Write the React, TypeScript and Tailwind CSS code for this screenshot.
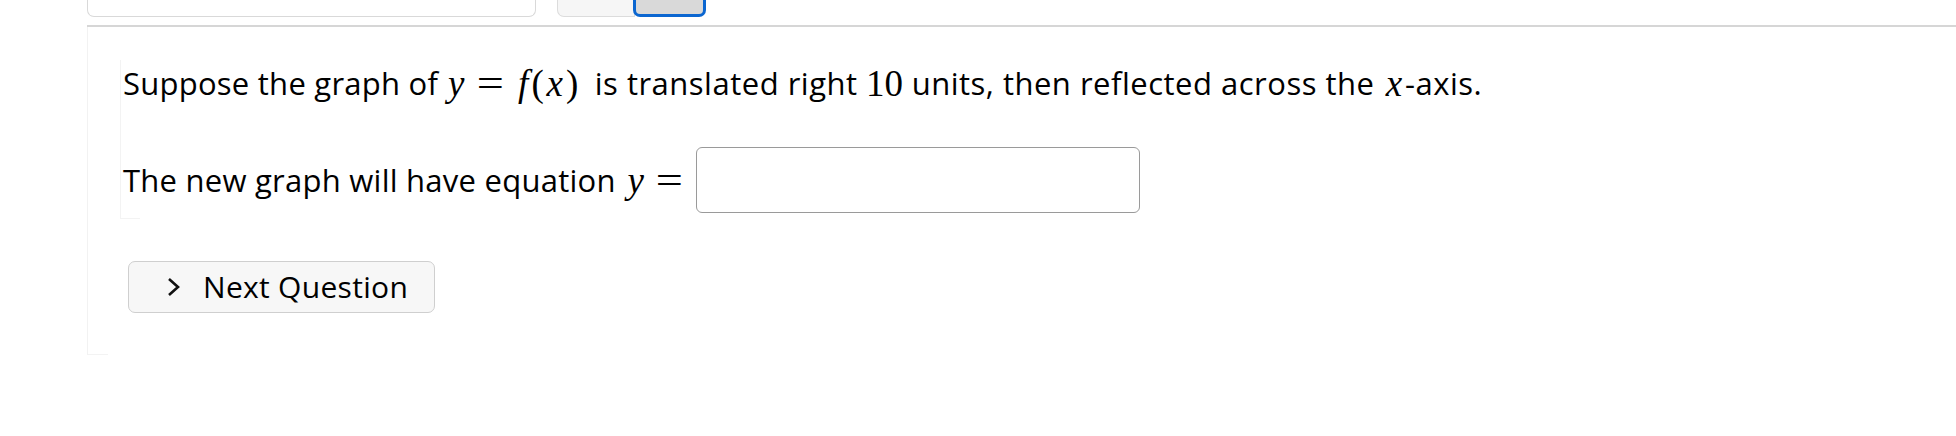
import React from "react";

function G({ children, italic = true, cls = "" }: { children: React.ReactNode; italic?: boolean; cls?: string }) {
  return (
    <span
      className={`inline-flex justify-center ${italic ? "italic" : ""} text-[37px] leading-none tracking-normal ${cls}`}
      style={{ fontFamily: '"Liberation Serif", "DejaVu Serif", serif' }}
    >
      {children}
    </span>
  );
}

function Eq({ cls = "" }: { cls?: string }) {
  return (
    <G italic={false} cls={`w-[28px] ${cls}`}>
      <span className="inline-block scale-x-[1.3]">=</span>
    </G>
  );
}

export default function App() {
  return (
    <div
      className="w-[1956px] h-[436px] bg-white text-black overflow-hidden"
      style={{ fontFamily: '"Open Sans", "Noto Sans", sans-serif' }}
    >
      {/* top tabs */}
      <div className="flex items-end h-[17px] pl-[87px]">
        <div className="w-[449px] h-[17px] border border-t-0 border-[#d9d9d9] rounded-b-[7px] bg-white" />
        <div className="ml-[21px] w-[78px] h-[17px] border border-t-0 border-[#dcdcdc] rounded-bl-[7px] bg-[#f6f6f6]" />
        <div className="-ml-[2px] w-[73px] h-[18px] border-[3px] border-t-0 border-[#0b66d0] rounded-b-[7px] bg-[#d9d9d9]" />
      </div>
      <div className="h-[8px]" />
      <div className="ml-[87px] h-[2px] bg-[#d6d6d6]" />

      {/* panel */}
      <div className="ml-[87px] h-[328px] border-l border-[#f2f2f2] flex flex-col">
        <div className="ml-[32px] mt-[33px] w-fit border-l border-[#f3f3f3] pl-[2px]">
          <div className="h-[46px] flex items-center text-[31px] tracking-[0.25px] whitespace-pre">
            <span>Suppose the graph of</span>
            <G cls="ml-[9px] w-[18px]">y</G>
            <Eq cls="ml-[11px]" />
            <G cls="ml-[9px] w-[20px]">f</G>
            <G italic={false} cls="w-[9px]">(</G>
            <G cls="ml-[2px] w-[21px]">x</G>
            <G italic={false} cls="ml-[2px] w-[10px]">)</G>
            <span className="ml-[9px] tracking-[0.5px]"> is translated right </span>
            <G italic={false}>10</G>
            <span className="tracking-[0.5px]"> units, then reflected across the </span>
            <G cls="w-[22px]">x</G>
            <span className="tracking-[0.5px]">-axis.</span>
          </div>
          <div className="mt-[41px] h-[66px] flex items-center text-[31px] tracking-[0.25px] whitespace-pre">
            <span>The new graph will have equation</span>
            <G cls="ml-[10px] w-[20px]">y</G>
            <Eq cls="ml-[10px]" />
            <div className="ml-[12px] w-[444px] h-[66px] border border-[#9a9a9a] rounded-[6px] bg-white" />
          </div>
          <div className="h-[5px]" />
        </div>
        <div className="ml-[32px] w-[20px] h-px bg-[#f3f3f3]" />

        <button className="ml-[40px] mt-[42px] w-[307px] h-[52px] flex items-center border-[1.5px] border-[#cfcfcf] rounded-[7px] bg-[#f7f7f7] text-[30px] tracking-[0.3px] text-black">
          <svg width="14" height="20" viewBox="0 0 14 20" className="ml-[38px]">
            <polyline points="2,2 11,10 2,18" fill="none" stroke="#111" strokeWidth="2.6" />
          </svg>
          <span className="ml-[22px] leading-none">Next Question</span>
        </button>
        <div className="flex-1" />
        <div className="w-[20px] h-px bg-[#f3f3f3]" />
      </div>
    </div>
  );
}
